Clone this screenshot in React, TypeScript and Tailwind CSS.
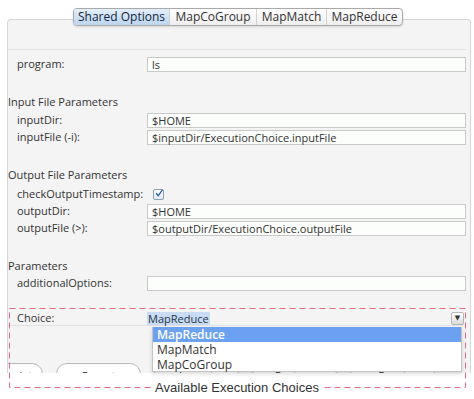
import React from 'react';

const font = { fontFamily: '"Lucida Grande", "Open Sans", "DejaVu Sans", sans-serif' };

function Field({ value }: { value?: string }) {
  return (
    <div className="h-[15px] flex-1 border border-[#c9c9c9] bg-[#fbfefb] pl-[4px] text-[11px] leading-[13px] text-[#333]">
      {value}
    </div>
  );
}

function Row({ label, value, className = '' }: { label: string; value?: string; className?: string }) {
  return (
    <div className={`flex h-[15px] items-center ${className}`}>
      <div className="w-[139px] pl-[9px] text-[11px] text-[#333]">{label}</div>
      <Field value={value} />
    </div>
  );
}

function Header({ text, className = '' }: { text: string; className?: string }) {
  return <div className={`h-[14px] text-[11px] leading-[14px] text-[#333] ${className}`}>{text}</div>;
}

const tabs = ['Shared Options', 'MapCoGroup', 'MapMatch', 'MapReduce'];
const tabWidths = ['w-[95px]', 'w-[87px]', 'w-[70px]', 'w-[76px]'];
const buttons = [
  { label: 'Update', w: 'w-[47px] -ml-[12px]' },
  { label: 'Export', w: 'w-[85px]' },
  { label: 'Import', w: 'w-[85px]' },
  { label: 'Restore', w: 'w-[85px]' },
  { label: 'Reset', w: 'w-[85px]' },
];

export default function App() {
  return (
    <div className="relative h-[399px] w-[474px] overflow-hidden bg-white" style={font}>
      {/* tab bar */}
      <div className="absolute left-[73px] top-[8px] z-10 flex h-[18px] overflow-hidden rounded-[4px] border border-[#a9a9a9] bg-gradient-to-b from-white to-[#eeeeee] shadow-sm">
        {tabs.map((t, i) => (
          <div
            key={t}
            className={`${tabWidths[i]} flex items-center justify-center text-[12px] leading-none ${
              i === 0
                ? 'bg-gradient-to-b from-[#e3eefa] to-[#bcd5ef] text-[#14263d]'
                : 'border-l border-[#d2d2d2] text-[#333]'
            }`}
          >
            {t}
          </div>
        ))}
      </div>

      {/* panel */}
      <div className="ml-[7px] mt-[19px] h-[354px] w-[464px] overflow-hidden rounded-t-[4px] border-x border-t border-[#d6d6d6] bg-[#f4f4f4] pr-[4px]">
        <div className="h-[30px] border-b border-[#e2e2e2]" />
        <Row label="program:" value="ls" className="mt-[7px]" />

        <Header text="Input File Parameters" className="mt-[23px]" />
        <Row label="inputDir:" value="$HOME" className="mt-[4px]" />
        <Row label="inputFile (-i):" value="$inputDir/ExecutionChoice.inputFile" className="mt-[2px]" />

        <Header text="Output File Parameters" className="mt-[23px]" />
        <div className="mt-[5px] flex h-[15px] items-center">
          <div className="w-[145px] pl-[9px] text-[11px] text-[#333]">checkOutputTimestamp:</div>
          <div className="flex h-[11px] w-[11px] items-center justify-center rounded-[2px] border border-[#8d9fb8] bg-gradient-to-b from-white to-[#dfe8f4]">
            <svg width="11" height="11" viewBox="0 0 11 11" className="-mt-[2px] ml-[1px]">
              <path d="M2 5.5 L4.5 8.5 L10 1" fill="none" stroke="#2d5fa8" strokeWidth="1.8" strokeLinecap="round" />
            </svg>
          </div>
        </div>
        <Row label="outputDir:" value="$HOME" className="mt-[2px]" />
        <Row label="outputFile (>):" value="$outputDir/ExecutionChoice.outputFile" className="mt-[2px]" />

        <Header text="Parameters" className="mt-[23px]" />
        <Row label="additionalOptions:" className="mt-[3px]" />

        {/* choice row */}
        <div className="mt-[21px] flex h-[14px] items-center border-b border-[#e2e2e2]">
          <div className="w-[139px] pl-[9px] text-[11px] text-[#333]">Choice:</div>
          <div className="flex h-[13px] flex-1 items-center">
            <span className="bg-[#c9dcf3] px-[1px] text-[11px] leading-[13px] text-[#1d3550]">MapReduce</span>
            <div className="flex-1" />
            <div className="mr-[2px] flex h-[13px] w-[13px] items-center justify-center rounded-[2px] border border-[#b5b5b5] bg-gradient-to-b from-white to-[#dcdcdc] text-[7px] text-[#333]">
              ▼
            </div>
          </div>
        </div>

        {/* button row, mostly hidden behind the cut */}
        <div className="mt-[37px] flex gap-[13px]">
          {buttons.map((b) => (
            <div
              key={b.label}
              className={`${b.w} h-[22px] rounded-full border border-[#b8b8b8] bg-white pt-[5px] text-center text-[11px] leading-[14px] text-[#333]`}
            >
              {b.label}
            </div>
          ))}
        </div>
      </div>

      {/* open dropdown */}
      <div className="absolute left-[152px] top-[327px] z-20 h-[45px] w-[310px] border-x border-b border-[#c4c4c4] bg-white shadow-[0_2px_4px_rgba(0,0,0,0.15)]">
        <div className="h-[15px] bg-[#6ba1f0] pl-[4px] text-[12px] font-semibold leading-[15px] text-white">MapReduce</div>
        <div className="h-[15px] pl-[4px] text-[12px] leading-[15px] text-[#333]">MapMatch</div>
        <div className="h-[15px] pl-[4px] text-[12px] leading-[15px] text-[#333]">MapCoGroup</div>
      </div>

      {/* annotation */}
      <svg className="pointer-events-none absolute left-0 top-0 z-30" width="474" height="399">
        <rect x="9.5" y="308.5" width="456" height="79" fill="none" stroke="#e46b86" strokeWidth="1" strokeDasharray="6 4" />
      </svg>
      <div className="absolute left-0 top-[380px] z-40 flex w-[474px] justify-center">
        <span
          className="bg-white px-[4px] text-[13px] leading-[16px] text-[#333]"
          style={{ fontFamily: '"Liberation Sans", Arial, sans-serif' }}
        >
          Available Execution Choices
        </span>
      </div>
    </div>
  );
}
